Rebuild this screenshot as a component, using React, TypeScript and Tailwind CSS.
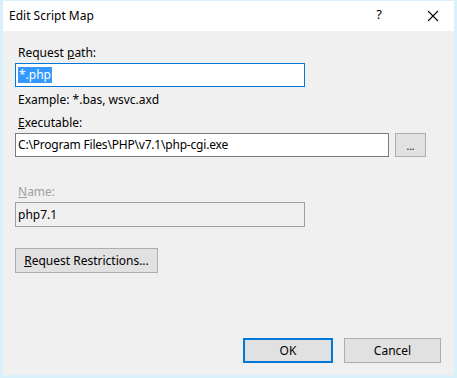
import React from "react";

export default function App() {
  const font = { fontFamily: '"Noto Sans", "Open Sans", sans-serif' };
  return (
    <div className="w-[457px] h-[378px] bg-[#d9f1fb] p-[1px] pl-[3px] pr-[3px] pb-[3px] overflow-hidden text-[12px] text-black" style={font}>
      <div className="w-full h-full flex flex-col bg-[#f0f0f0]">
        <div className="h-[30px] bg-white flex items-center pl-[6px] shrink-0">
          <span className="text-[12px] mt-[-1px]">Edit Script Map</span>
          <span className="ml-auto mr-[45px] text-[13px] mt-[-3px]">?</span>
          <svg width="12" height="12" viewBox="0 0 12 12" className="mr-[15px]">
            <path d="M1 1L11 11M11 1L1 11" stroke="#000" strokeWidth="1.1" />
          </svg>
        </div>
        <div className="flex flex-col pl-[12px] pr-[14px] relative flex-1">
          <div className="mt-[14px] ml-[3px] leading-[16px]">
            Request <span className="underline">p</span>ath:
          </div>
          <div className="mt-[2px] w-[290px] h-[24px] bg-white border border-[#0078d7] flex items-center px-[2px]">
            <span className="bg-[#3399ff] text-white leading-[16px] px-[1px]">*.php</span>
          </div>
          <div className="mt-[5px] ml-[3px] leading-[16px]">Example: *.bas, wsvc.axd</div>
          <div className="mt-[7px] ml-[3px] leading-[16px]">
            <span className="underline">E</span>xecutable:
          </div>
          <div className="mt-[2px] flex items-center">
            <div className="w-[374px] h-[24px] bg-white border border-[#7a7a7a] flex items-center px-[2px] tracking-[-0.2px]">
              C:\Program Files\PHP\v7.1\php-cgi.exe
            </div>
            <div className="ml-[6px] w-[31px] h-[24px] bg-[#e1e1e1] border border-[#adadad] flex items-center justify-center text-[10px] leading-none pt-[2px]">
              ...
            </div>
          </div>
          <div className="mt-[27px] ml-[3px] leading-[16px] text-[#a0a0a0]">
            <span className="underline">N</span>ame:
          </div>
          <div className="mt-[2px] w-[290px] h-[25px] bg-[#f0f0f0] border border-[#a0a0a0] flex items-center px-[2px]">
            php7.1
          </div>
          <div className="mt-[21px] w-[143px] h-[25px] bg-[#e1e1e1] border border-[#adadad] flex items-center justify-center">
            <span>
              <span className="underline">R</span>equest Restrictions...
            </span>
          </div>
          <div className="absolute bottom-[12px] right-[13px] flex gap-[11px]">
            <div className="w-[90px] h-[25px] bg-[#e1e1e1] border-2 border-[#0078d7] flex items-center justify-center">
              OK
            </div>
            <div className="w-[97px] h-[25px] bg-[#e1e1e1] border border-[#adadad] flex items-center justify-center">
              Cancel
            </div>
          </div>
        </div>
      </div>
    </div>
  );
}
